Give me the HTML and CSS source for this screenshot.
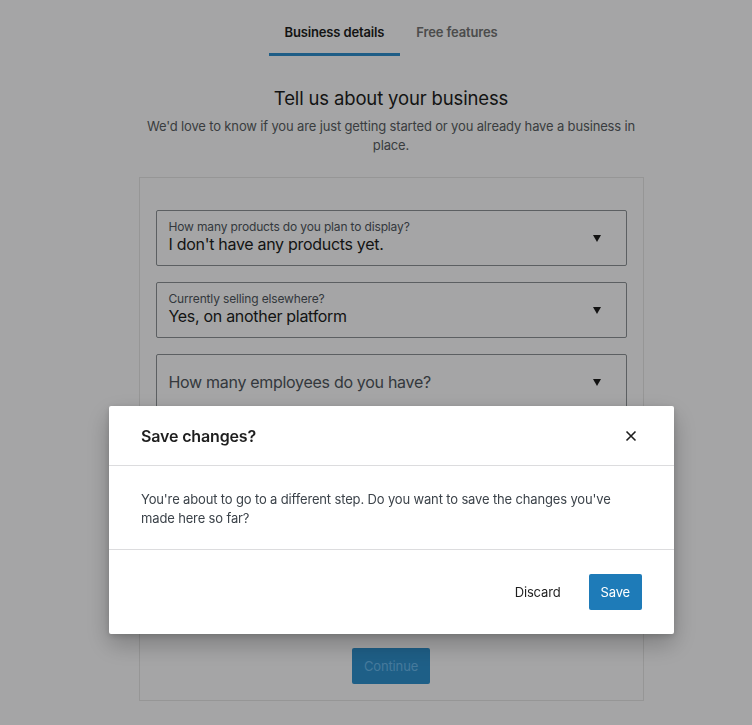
FILE: index.html
```html
<!DOCTYPE html>
<html>
<head>
    <title>Business details</title>
    <link rel="stylesheet" href="styles.css">
</head>
<body>
    <div class="page">
        <nav class="tabs">
            <a class="tab active">Business details</a>
            <a class="tab">Free features</a>
        </nav>

        <h2 class="title">Tell us about your business</h2>
        <p class="subtitle">We'd love to know if you are just getting started or you already have a business in place.</p>

        <div class="card">
            <div class="select">
                <div class="select-text">
                    <span class="select-label">How many products do you plan to display?</span>
                    <span class="select-value">I don't have any products yet.</span>
                </div>
                <span class="arrow"></span>
            </div>

            <div class="select">
                <div class="select-text">
                    <span class="select-label">Currently selling elsewhere?</span>
                    <span class="select-value">Yes, on another platform</span>
                </div>
                <span class="arrow"></span>
            </div>

            <div class="select">
                <div class="select-text">
                    <span class="select-placeholder">How many employees do you have?</span>
                </div>
                <span class="arrow"></span>
            </div>

            <div class="select">
                <div class="select-text">
                    <span class="select-placeholder">Which platform is the store using?</span>
                </div>
                <span class="arrow"></span>
            </div>

            <div class="select">
                <div class="select-text">
                    <span class="select-placeholder">How many products do you have?</span>
                </div>
                <span class="arrow"></span>
            </div>

            <div class="select">
                <div class="select-text">
                    <span class="select-placeholder">What is your monthly revenue?</span>
                </div>
                <span class="arrow"></span>
            </div>

            <div class="card-footer">
                <button class="btn btn-continue" disabled>Continue</button>
            </div>
        </div>
    </div>

    <div class="overlay">
        <div class="modal">
            <div class="modal-header">
                <h1 class="modal-title">Save changes?</h1>
                <button class="modal-close" aria-label="Close">
                    <svg width="24" height="24" viewBox="0 0 24 24"><path d="M7.5 7.5l9 9M16.5 7.5l-9 9" stroke="#1e1e1e" stroke-width="1.6" fill="none"/></svg>
                </button>
            </div>
            <div class="modal-body">
                You're about to go to a different step. Do you want to save the changes you've made here so far?
            </div>
            <div class="modal-footer">
                <button class="btn btn-link">Discard</button>
                <button class="btn btn-primary">Save</button>
            </div>
        </div>
    </div>
</body>
</html>
```

FILE: styles.css
```css
body {
    margin: 0;
    background-color: #fdfeff;
    color: #1e1e1e;
    font-family: Inter, "Noto Sans", sans-serif;
    letter-spacing: -0.15px;
    height: 725px;
    overflow: hidden;
}

.page {
    padding-left: 30px;
    display: flex;
    flex-direction: column;
    align-items: center;
}

.tabs {
    display: flex;
}

.tab {
    font-size: 13px;
    font-weight: 600;
    color: #757575;
    padding: 24px 16px 13px;
    border-bottom: 3px solid transparent;
}

.tab.active {
    color: #1e1e1e;
    border-bottom-color: #2f8fce;
}

.title {
    font-size: 18.5px;
    font-weight: 400;
    line-height: 24px;
    margin: 30px 0 7px;
}

.subtitle {
    font-size: 13px;
    line-height: 19px;
    color: #5a5f63;
    text-align: center;
    max-width: 500px;
    margin: 0 0 22px;
}

.card {
    width: 471px;
    padding: 32px 16px 16px;
    border: 1px solid #e6e6e6;
    display: flex;
    flex-direction: column;
    gap: 16px;
}

.select {
    height: 54px;
    border: 1px solid #8e9397;
    border-radius: 2px;
    display: flex;
    align-items: center;
    padding: 0 25px 0 12px;
}

.select-text {
    flex: 1;
    display: flex;
    flex-direction: column;
}

.select-label {
    font-size: 12px;
    color: #50575e;
    line-height: 15px;
    margin-top: -3px;
}

.select-value {
    font-size: 16px;
    line-height: 21px;
    letter-spacing: -0.3px;
}

.select-placeholder {
    font-size: 16px;
    letter-spacing: -0.3px;
    color: #50575e;
}

.arrow {
    width: 0;
    height: 0;
    border-left: 4.5px solid transparent;
    border-right: 4.5px solid transparent;
    border-top: 7px solid #1e1e1e;
}

.card-footer {
    display: flex;
    justify-content: center;
    padding-top: 6px;
}

.btn {
    font-family: inherit;
    font-size: 13px;
    letter-spacing: -0.15px;
    height: 36px;
    padding: 0 12px;
    border: none;
    border-radius: 2px;
    background: none;
    cursor: pointer;
}

.btn-continue {
    width: 78px;
    background-color: #2f92cf;
    color: #6cbcf0;
}

.btn-primary {
    background-color: #1e7bb8;
    color: #fff;
}

.btn-link {
    color: #1e1e1e;
}

.overlay {
    position: fixed;
    inset: 0;
    background-color: rgba(0, 0, 0, 0.35);
}

.modal {
    position: absolute;
    left: 109px;
    top: 406px;
    width: 565px;
    background: #fff;
    border-radius: 2px;
    box-shadow: 0 10px 24px rgba(0, 0, 0, 0.25), 0 2px 6px rgba(0, 0, 0, 0.15);
}

.modal-header {
    height: 59px;
    padding: 0 32px;
    display: flex;
    align-items: center;
    justify-content: space-between;
    border-bottom: 1px solid #dcdcde;
}

.modal-title {
    font-size: 16px;
    font-weight: 600;
    margin: 0;
}

.modal-close {
    border: none;
    background: none;
    padding: 0;
    margin-right: -1px;
    display: flex;
}

.modal-body {
    font-size: 13px;
    line-height: 19px;
    color: #3c434a;
    padding: 24px 32px 21px;
    border-bottom: 1px solid #dcdcde;
}

.modal-footer {
    display: flex;
    justify-content: flex-end;
    align-items: center;
    gap: 16px;
    padding: 24px 32px;
}
```
